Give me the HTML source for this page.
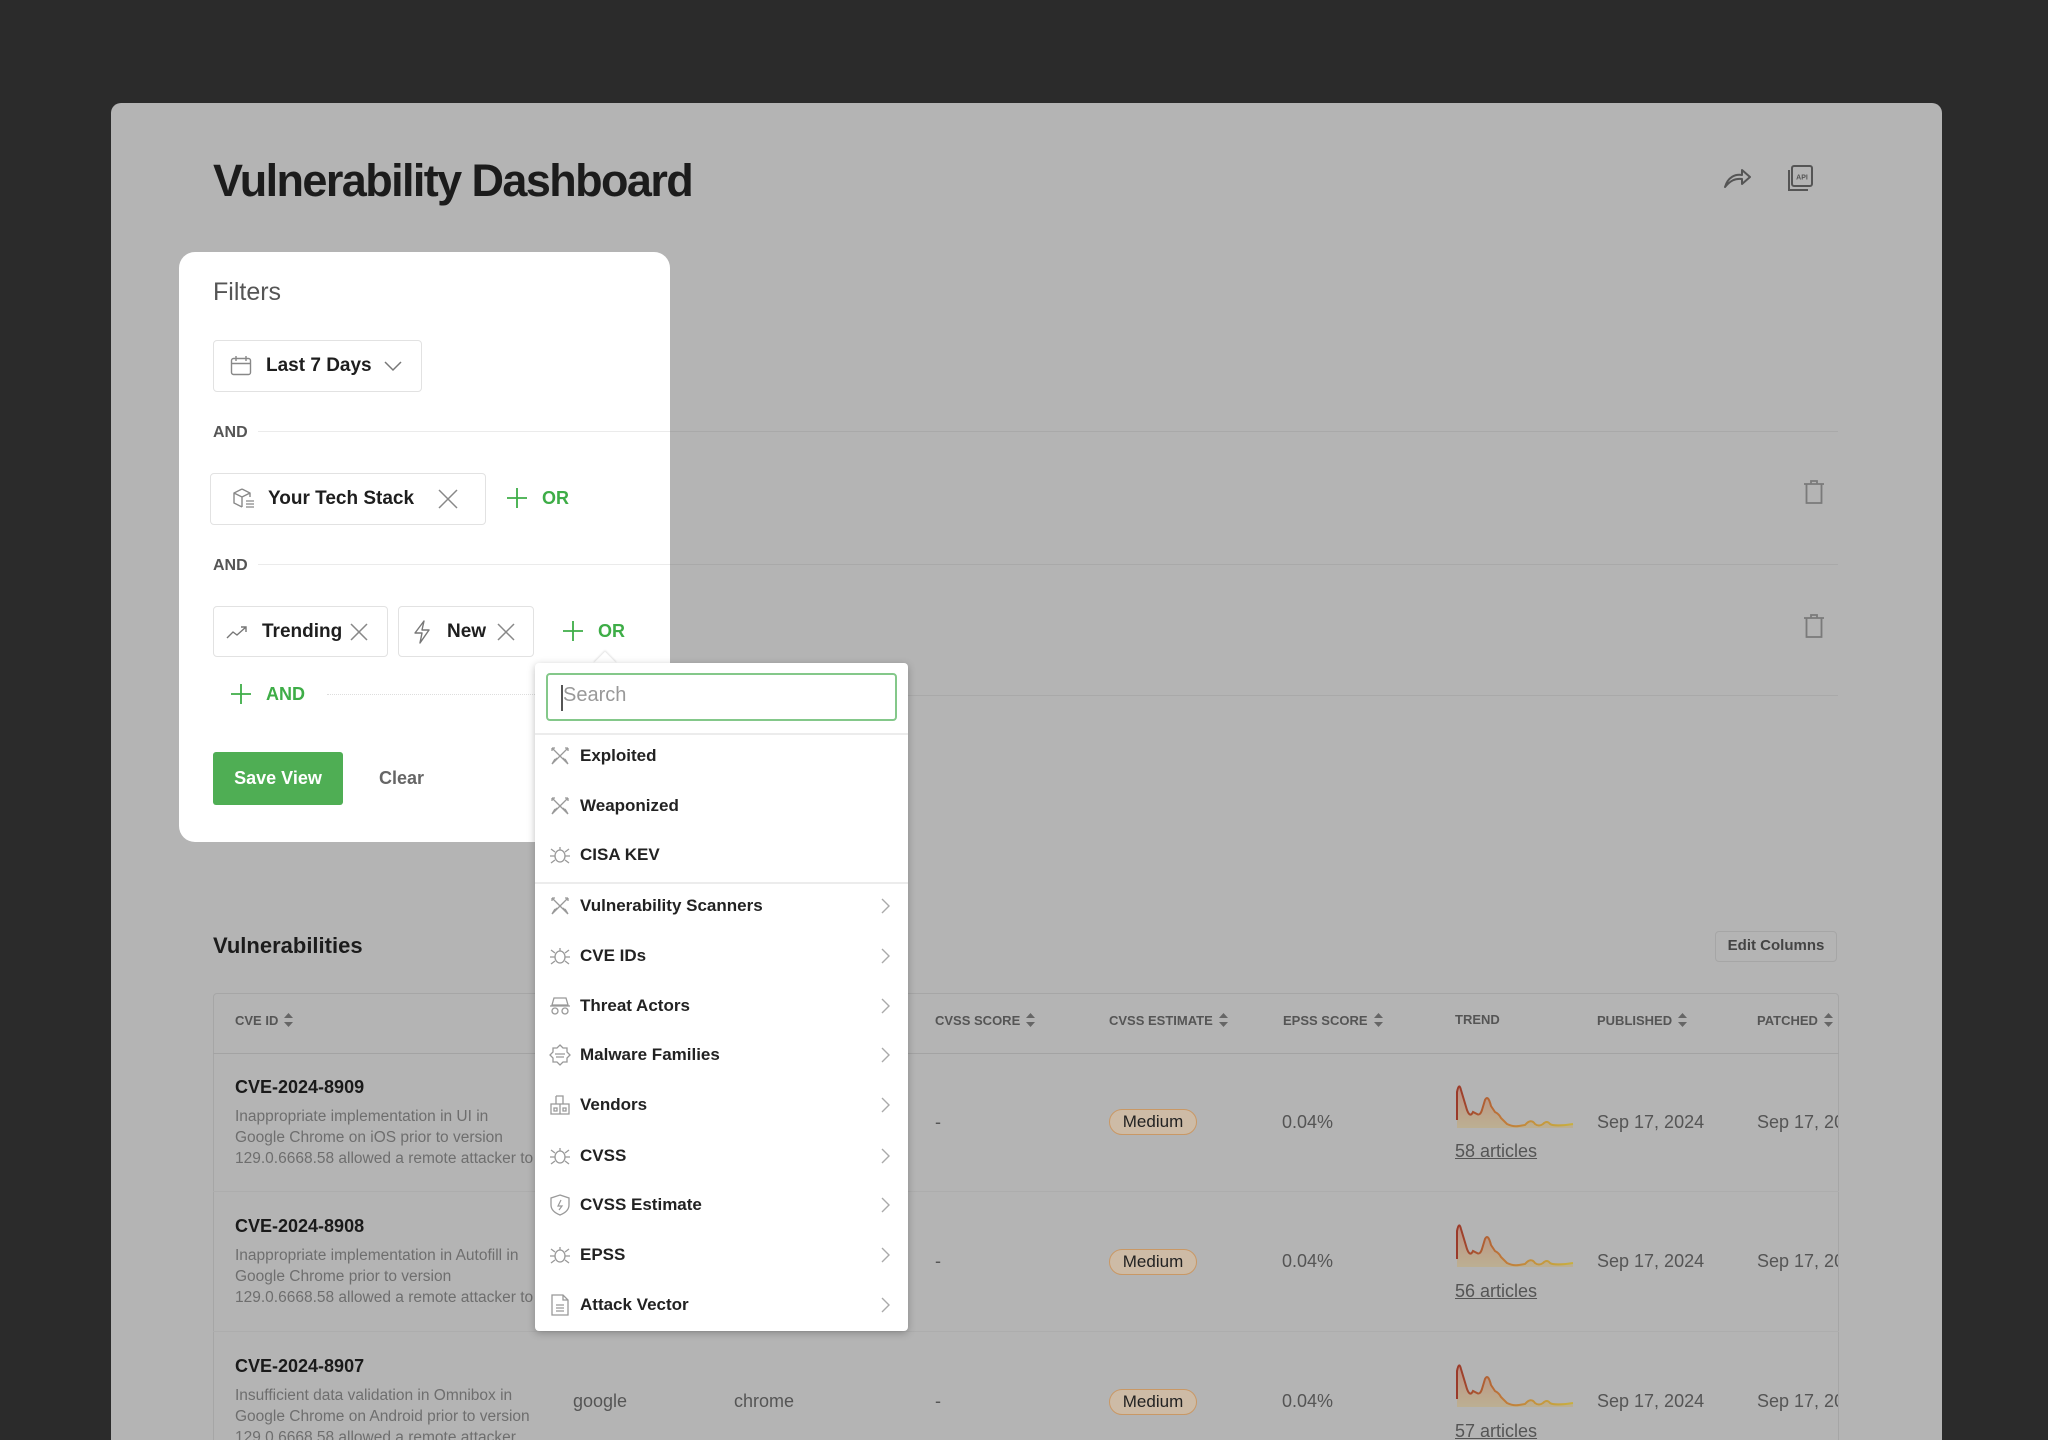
<!DOCTYPE html>
<html><head><meta charset="utf-8"><style>
*{margin:0;padding:0;box-sizing:border-box}
html{width:2048px;height:1440px;overflow:hidden}
body{width:2048px;height:1440px;background:#2b2b2b;font-family:"Liberation Sans",Arial,sans-serif;position:relative;overflow:hidden}
.a{position:absolute}
.panel{left:111px;top:103px;width:1831px;height:1337px;background:#b4b4b4;border-radius:10px 10px 0 0}
.title{left:213px;top:155px;font-size:45px;font-weight:bold;color:#1c1c1c;letter-spacing:-1.6px}
.card{left:179px;top:252px;width:491px;height:590px;background:#fff;border-radius:16px}
.chip{position:absolute;border:1.5px solid #e2e2e2;border-radius:4px;background:#fff;display:flex;align-items:center;font-size:19px;font-weight:bold;color:#1e1e1e}
.and{font-size:16px;font-weight:bold;color:#555}
.green{color:#3ead47;font-weight:bold;font-size:18px}
.hl{height:1px;background:#ebebeb}
.hlg{height:1px;background:#a9a9a9}
.dd{left:535px;top:663px;width:373px;height:668px;background:#fff;border-radius:4px;box-shadow:0 2px 8px rgba(0,0,0,.25)}
.item{position:absolute;left:0;width:373px;height:50px;display:flex;align-items:center;font-size:17px;font-weight:bold;color:#222}
.item svg.ic{position:absolute;left:14px}
.item span{position:absolute;left:45px}
.item .chev{position:absolute;left:345px}
.th{position:absolute;top:1013px;font-size:13px;font-weight:bold;color:#555}
.sort{display:inline-block;margin-left:6px;vertical-align:-2px}
.cve{position:absolute;left:235px;font-size:18px;font-weight:bold;color:#1a1a1a}
.desc{position:absolute;left:235px;font-size:15.5px;color:#6e6e6e;line-height:21px;width:300px;white-space:nowrap;overflow:hidden}
.v{position:absolute;font-size:18px;color:#555}
.badge{position:absolute;left:1109px;width:88px;height:26px;border:1.5px solid #c99865;background:#cdbba6;border-radius:13px;font-size:17px;color:#222;text-align:center;line-height:23px}
.art{position:absolute;left:1455px;font-size:18px;color:#555;text-decoration:underline}
</style></head><body>
<div class="a panel"></div>
<div class="a title">Vulnerability Dashboard</div>
<svg class="a" style="left:1722px;top:165px" width="30" height="26" viewBox="0 0 30 26"><path d="M3 22 C6 12 13 9 20 10 L20 5 L28 12 L20 19 L20 14 C13 13 8 16 3 22Z" fill="none" stroke="#555" stroke-width="2" stroke-linejoin="round"/></svg>
<svg class="a" style="left:1786px;top:164px" width="30" height="30" viewBox="0 0 30 30"><rect x="6" y="2" width="20" height="20" rx="2" fill="none" stroke="#555" stroke-width="2"/><path d="M3 6 V26 H22" fill="none" stroke="#555" stroke-width="2"/><text x="16" y="15.5" font-size="7" font-weight="bold" fill="#555" text-anchor="middle" font-family="Liberation Sans">API</text></svg>
<div class="a hlg" style="left:670px;top:431px;width:1168px"></div>
<div class="a hlg" style="left:670px;top:564px;width:1168px"></div>
<div class="a hlg" style="left:670px;top:695px;width:1168px"></div>
<svg class="a" style="left:1803px;top:479px" width="22" height="26" viewBox="0 0 22 26"><path d="M1 5 H21 M8 5 V2 H14 V5 M3.5 5 V24 H18.5 V5" fill="none" stroke="#7a7a7a" stroke-width="1.8"/></svg>
<svg class="a" style="left:1803px;top:613px" width="22" height="26" viewBox="0 0 22 26"><path d="M1 5 H21 M8 5 V2 H14 V5 M3.5 5 V24 H18.5 V5" fill="none" stroke="#7a7a7a" stroke-width="1.8"/></svg>
<div class="a" style="left:213px;top:933px;font-size:22px;font-weight:bold;color:#1c1c1c">Vulnerabilities</div>
<div class="a" style="left:1715px;top:931px;width:122px;height:31px;border:1.5px solid #a6a6a6;border-radius:4px;font-size:15px;font-weight:bold;color:#444;text-align:center;line-height:28px">Edit Columns</div>
<div class="a" style="left:213px;top:993px;width:1626px;height:520px;border:1.5px solid #a6a6a6;border-radius:4px"></div>
<div class="a hlg" style="left:213px;top:1053px;width:1626px;background:#a3a3a3"></div>
<div class="a hlg" style="left:213px;top:1191px;width:1626px;background:#adadad"></div>
<div class="a hlg" style="left:213px;top:1331px;width:1626px;background:#adadad"></div>
<div class="th" style="left:235px">CVE ID<svg class="sort" width="9" height="14"><path d="M4.5 0 L9 5 H0Z M4.5 14 L9 9 H0Z" fill="#666"/></svg></div>
<div class="th" style="left:935px">CVSS SCORE<svg class="sort" width="9" height="14"><path d="M4.5 0 L9 5 H0Z M4.5 14 L9 9 H0Z" fill="#666"/></svg></div>
<div class="th" style="left:1109px">CVSS ESTIMATE<svg class="sort" width="9" height="14"><path d="M4.5 0 L9 5 H0Z M4.5 14 L9 9 H0Z" fill="#666"/></svg></div>
<div class="th" style="left:1283px">EPSS SCORE<svg class="sort" width="9" height="14"><path d="M4.5 0 L9 5 H0Z M4.5 14 L9 9 H0Z" fill="#666"/></svg></div>
<div class="th" style="left:1455px;top:1012px">TREND</div>
<div class="th" style="left:1597px">PUBLISHED<svg class="sort" width="9" height="14"><path d="M4.5 0 L9 5 H0Z M4.5 14 L9 9 H0Z" fill="#666"/></svg></div>
<div class="th" style="left:1757px">PATCHED<svg class="sort" width="9" height="14"><path d="M4.5 0 L9 5 H0Z M4.5 14 L9 9 H0Z" fill="#666"/></svg></div>

<svg width="0" height="0" style="position:absolute"><defs><linearGradient id="sl" x1="0" x2="1"><stop offset="0" stop-color="#9a3a2a"/><stop offset=".4" stop-color="#c07a3a"/><stop offset="1" stop-color="#c8b040"/></linearGradient><linearGradient id="sf" x1="0" x2="0" y1="0" y2="1"><stop offset="0" stop-color="#c07060" stop-opacity=".6"/><stop offset="1" stop-color="#c8a860" stop-opacity=".4"/></linearGradient></defs></svg>

<div class="cve" style="top:1077px">CVE-2024-8909</div>
<div class="desc" style="top:1106px">Inappropriate implementation in UI in<br>Google Chrome on iOS prior to version<br>129.0.6668.58 allowed a remote attacker to</div>
<div class="v" style="left:935px;top:1112px">-</div>
<div class="badge" style="top:1109px">Medium</div>
<div class="v" style="left:1282px;top:1112px">0.04%</div>
<svg class="a" style="left:1455px;top:1080px" width="120" height="50"><path d="M2 40 L2 12 Q4 2 6 10 L12 30 Q15 38 18 32 L22 34 Q25 36 27 30 L30 20 Q33 14 36 26 L40 32 Q44 34 46 38 L52 44 Q58 47 64 46 L70 45 Q76 38 80 44 Q84 47 88 44 Q92 40 95 44 L118 44 L118 48 L2 48Z" fill="url(#sf)"/><path d="M2 40 L2 12 Q4 2 6 10 L12 30 Q15 38 18 32 L22 34 Q25 36 27 30 L30 20 Q33 14 36 26 L40 32 Q44 34 46 38 L52 44 Q58 47 64 46 L70 45 Q76 38 80 44 Q84 47 88 44 Q92 40 95 44 Q100 47 118 44" fill="none" stroke="url(#sl)" stroke-width="2"/></svg>
<div class="art" style="top:1141px">58 articles</div>
<div class="v" style="left:1597px;top:1112px">Sep 17, 2024</div>
<div class="v" style="left:1757px;top:1112px;width:81px;overflow:hidden;white-space:nowrap">Sep 17, 2024</div>

<div class="cve" style="top:1216px">CVE-2024-8908</div>
<div class="desc" style="top:1245px">Inappropriate implementation in Autofill in<br>Google Chrome prior to version<br>129.0.6668.58 allowed a remote attacker to</div>
<div class="v" style="left:935px;top:1251px">-</div>
<div class="badge" style="top:1249px">Medium</div>
<div class="v" style="left:1282px;top:1251px">0.04%</div>
<svg class="a" style="left:1455px;top:1219px" width="120" height="50"><path d="M2 40 L2 12 Q4 2 6 10 L12 30 Q15 38 18 32 L22 34 Q25 36 27 30 L30 20 Q33 14 36 26 L40 32 Q44 34 46 38 L52 44 Q58 47 64 46 L70 45 Q76 38 80 44 Q84 47 88 44 Q92 40 95 44 L118 44 L118 48 L2 48Z" fill="url(#sf)"/><path d="M2 40 L2 12 Q4 2 6 10 L12 30 Q15 38 18 32 L22 34 Q25 36 27 30 L30 20 Q33 14 36 26 L40 32 Q44 34 46 38 L52 44 Q58 47 64 46 L70 45 Q76 38 80 44 Q84 47 88 44 Q92 40 95 44 Q100 47 118 44" fill="none" stroke="url(#sl)" stroke-width="2"/></svg>
<div class="art" style="top:1281px">56 articles</div>
<div class="v" style="left:1597px;top:1251px">Sep 17, 2024</div>
<div class="v" style="left:1757px;top:1251px;width:81px;overflow:hidden;white-space:nowrap">Sep 17, 2024</div>

<div class="cve" style="top:1356px">CVE-2024-8907</div>
<div class="desc" style="top:1385px;width:320px">Insufficient data validation in Omnibox in<br>Google Chrome on Android prior to version<br>129.0.6668.58 allowed a remote attacker</div>
<div class="v" style="left:573px;top:1391px">google</div>
<div class="v" style="left:734px;top:1391px">chrome</div>
<div class="v" style="left:935px;top:1391px">-</div>
<div class="badge" style="top:1389px">Medium</div>
<div class="v" style="left:1282px;top:1391px">0.04%</div>
<svg class="a" style="left:1455px;top:1359px" width="120" height="50"><path d="M2 40 L2 12 Q4 2 6 10 L12 30 Q15 38 18 32 L22 34 Q25 36 27 30 L30 20 Q33 14 36 26 L40 32 Q44 34 46 38 L52 44 Q58 47 64 46 L70 45 Q76 38 80 44 Q84 47 88 44 Q92 40 95 44 L118 44 L118 48 L2 48Z" fill="url(#sf)"/><path d="M2 40 L2 12 Q4 2 6 10 L12 30 Q15 38 18 32 L22 34 Q25 36 27 30 L30 20 Q33 14 36 26 L40 32 Q44 34 46 38 L52 44 Q58 47 64 46 L70 45 Q76 38 80 44 Q84 47 88 44 Q92 40 95 44 Q100 47 118 44" fill="none" stroke="url(#sl)" stroke-width="2"/></svg>
<div class="art" style="top:1421px">57 articles</div>
<div class="v" style="left:1597px;top:1391px">Sep 17, 2024</div>
<div class="v" style="left:1757px;top:1391px;width:81px;overflow:hidden;white-space:nowrap">Sep 17, 2024</div>

<div class="a card"></div>
<div class="a" style="left:213px;top:278px;font-size:25px;color:#555">Filters</div>
<div class="chip" style="left:213px;top:340px;width:209px;height:52px">
 <svg style="position:absolute;left:16px" width="22" height="22" viewBox="0 0 22 22"><rect x="1.5" y="3.5" width="19" height="16" rx="2" fill="none" stroke="#888" stroke-width="1.4"/><path d="M1.5 8.5 H20.5 M6 1 V6 M16 1 V6" stroke="#888" stroke-width="1.4"/></svg>
 <span style="position:absolute;left:52px">Last 7 Days</span>
 <svg style="position:absolute;left:170px" width="18" height="12"><path d="M1 2 L9 10 L17 2" fill="none" stroke="#777" stroke-width="1.5"/></svg>
</div>
<div class="a and" style="left:213px;top:424px">AND</div>
<div class="a hl" style="left:258px;top:431px;width:412px"></div>
<div class="chip" style="left:210px;top:473px;width:276px;height:52px">
 <svg style="position:absolute;left:21px" width="24" height="24" viewBox="0 0 24 24"><path d="M10 2 L18 6 V10 M10 2 L2 6 V16 L10 20 M2 6 L10 10 L18 6 M10 10 V20" fill="none" stroke="#888" stroke-width="1.4"/><path d="M14 14 H22 M14 17 H22 M14 20 H22" stroke="#888" stroke-width="1.3"/></svg>
 <span style="position:absolute;left:57px">Your Tech Stack</span>
 <svg style="position:absolute;left:226px" width="22" height="22"><path d="M2 2 L20 20 M20 2 L2 20" stroke="#888" stroke-width="1.5"/></svg>
</div>
<svg class="a" style="left:507px;top:488px" width="20" height="20"><path d="M10 0 V20 M0 10 H20" stroke="#3ead47" stroke-width="1.8"/></svg>
<div class="a green" style="left:542px;top:488px">OR</div>
<div class="a and" style="left:213px;top:557px">AND</div>
<div class="a hl" style="left:258px;top:564px;width:412px"></div>
<div class="chip" style="left:213px;top:606px;width:175px;height:51px">
 <svg style="position:absolute;left:12px" width="24" height="16" viewBox="0 0 24 16"><path d="M1 14 L7 8 L11 11 L20 3 M15 3 H20 V8" fill="none" stroke="#777" stroke-width="1.4"/></svg>
 <span style="position:absolute;left:48px">Trending</span>
 <svg style="position:absolute;left:135px" width="20" height="20"><path d="M2 2 L18 18 M18 2 L2 18" stroke="#888" stroke-width="1.5"/></svg>
</div>
<div class="chip" style="left:398px;top:606px;width:136px;height:51px">
 <svg style="position:absolute;left:14px" width="18" height="24" viewBox="0 0 18 24"><path d="M11 1 L2 13 H9 L7 23 L16 10 H9 Z" fill="none" stroke="#777" stroke-width="1.4" stroke-linejoin="round"/></svg>
 <span style="position:absolute;left:48px">New</span>
 <svg style="position:absolute;left:97px" width="20" height="20"><path d="M2 2 L18 18 M18 2 L2 18" stroke="#888" stroke-width="1.5"/></svg>
</div>
<svg class="a" style="left:563px;top:621px" width="20" height="20"><path d="M10 0 V20 M0 10 H20" stroke="#3ead47" stroke-width="1.8"/></svg>
<div class="a green" style="left:598px;top:621px">OR</div>
<svg class="a" style="left:231px;top:684px" width="20" height="20"><path d="M10 0 V20 M0 10 H20" stroke="#3ead47" stroke-width="1.8"/></svg>
<div class="a green" style="left:266px;top:684px">AND</div>
<div class="a" style="left:327px;top:694px;width:210px;border-top:1.5px dotted #ddd"></div>
<div class="a" style="left:213px;top:752px;width:130px;height:53px;background:#4fae54;border-radius:3px;color:#fff;font-size:18px;font-weight:bold;text-align:center;line-height:53px">Save View</div>
<div class="a" style="left:379px;top:768px;font-size:18px;font-weight:bold;color:#666">Clear</div>

<div class="a" style="left:597px;top:655px;width:16px;height:16px;background:#fff;transform:rotate(45deg);box-shadow:-1px -1px 2px rgba(0,0,0,.12)"></div>
<div class="a dd">
 <div class="a" style="left:11px;top:10px;width:351px;height:48px;border:2px solid #84c88a;border-radius:4px"></div>
 <div class="a" style="left:26px;top:22px;width:1.5px;height:26px;background:#555"></div>
 <div class="a" style="left:28px;top:21px;font-size:20px;color:#999">Search</div>
 <div class="a" style="left:0;top:70px;width:373px;height:2px;background:#ececec"></div>
 <div class="a" style="left:0;top:219px;width:373px;height:2px;background:#ececec"></div>
</div>
<div class="a" style="left:535px;top:663px;width:373px;height:668px">
 <svg width="0" height="0" style="position:absolute"><defs>
  <g id="sw"><path d="M3 3 L19 19 M19 3 L3 19 M3 3 L6 3 M3 3 L3 6 M19 3 L16 3 M19 3 L19 6 M6 14 L3 19 M16 14 L19 19 M5 16 L8 13 M17 16 L14 13" fill="none" stroke="#999" stroke-width="1.3"/></g>
  <g id="bug"><ellipse cx="11" cy="12" rx="5" ry="6" fill="none" stroke="#999" stroke-width="1.3"/><path d="M11 6 V3 M6 12 H1 M16 12 H21 M6 8 L2 5 M16 8 L20 5 M6 16 L2 19 M16 16 L20 19" stroke="#999" stroke-width="1.3"/></g>
  <g id="chev"><path d="M2 2 L9 9 L2 16" fill="none" stroke="#aaa" stroke-width="1.4"/></g>
 </defs></svg>
 <div class="item" style="top:68px"><svg class="ic" width="22" height="22"><use href="#sw"/></svg><span>Exploited</span></div>
 <div class="item" style="top:118px"><svg class="ic" width="22" height="22"><use href="#sw"/></svg><span>Weaponized</span></div>
 <div class="item" style="top:167px"><svg class="ic" width="22" height="22"><use href="#bug"/></svg><span>CISA KEV</span></div>
 <div class="item" style="top:218px"><svg class="ic" width="22" height="22"><use href="#sw"/></svg><span>Vulnerability Scanners</span><svg class="chev" width="12" height="18"><use href="#chev"/></svg></div>
 <div class="item" style="top:268px"><svg class="ic" width="22" height="22"><use href="#bug"/></svg><span>CVE IDs</span><svg class="chev" width="12" height="18"><use href="#chev"/></svg></div>
 <div class="item" style="top:318px"><svg class="ic" width="22" height="22"><path d="M5 3 H17 L19 10 H3 Z M1 11 H21" fill="none" stroke="#999" stroke-width="1.3"/><circle cx="6" cy="16" r="3" fill="none" stroke="#999" stroke-width="1.3"/><circle cx="16" cy="16" r="3" fill="none" stroke="#999" stroke-width="1.3"/></svg><span>Threat Actors</span><svg class="chev" width="12" height="18"><use href="#chev"/></svg></div>
 <div class="item" style="top:367px"><svg class="ic" width="22" height="22"><path d="M11 1 L14 4 L18 4 L18 8 L21 11 L18 14 L18 18 L14 18 L11 21 L8 18 L4 18 L4 14 L1 11 L4 8 L4 4 L8 4 Z" fill="none" stroke="#999" stroke-width="1.3"/><path d="M6 10 H16 M7 13 H15" stroke="#999" stroke-width="1.2"/></svg><span>Malware Families</span><svg class="chev" width="12" height="18"><use href="#chev"/></svg></div>
 <div class="item" style="top:417px"><svg class="ic" width="22" height="22"><path d="M7 2 H14 V10 M2 10 H20 V20 H2 Z M11 10 V20 M5 14 H8 V17 H5 Z M14 14 H17 V17 H14 Z M7 2 V10" fill="none" stroke="#999" stroke-width="1.3"/></svg><span>Vendors</span><svg class="chev" width="12" height="18"><use href="#chev"/></svg></div>
 <div class="item" style="top:468px"><svg class="ic" width="22" height="22"><use href="#bug"/></svg><span>CVSS</span><svg class="chev" width="12" height="18"><use href="#chev"/></svg></div>
 <div class="item" style="top:517px"><svg class="ic" width="22" height="22"><path d="M11 1 L20 4 V11 C20 16 16 19 11 21 C6 19 2 16 2 11 V4 Z" fill="none" stroke="#999" stroke-width="1.3"/><path d="M12 6 L9 12 H13 L10 16" fill="none" stroke="#999" stroke-width="1.2"/></svg><span>CVSS Estimate</span><svg class="chev" width="12" height="18"><use href="#chev"/></svg></div>
 <div class="item" style="top:567px"><svg class="ic" width="22" height="22"><use href="#bug"/></svg><span>EPSS</span><svg class="chev" width="12" height="18"><use href="#chev"/></svg></div>
 <div class="item" style="top:617px"><svg class="ic" width="22" height="22"><path d="M3 1 H14 L19 6 V21 H3 Z M14 1 V6 H19 M7 11 H15 M7 14 H15 M7 17 H15" fill="none" stroke="#999" stroke-width="1.3"/></svg><span>Attack Vector</span><svg class="chev" width="12" height="18"><use href="#chev"/></svg></div>
</div>
</body></html>
